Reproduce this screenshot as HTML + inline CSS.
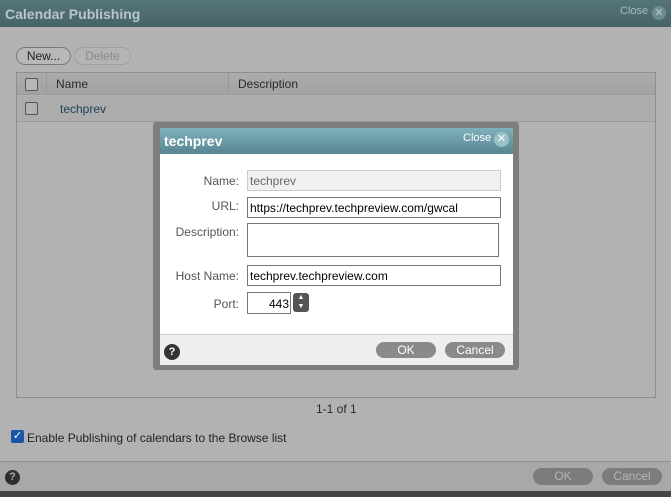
<!DOCTYPE html><html><head><style>
*{box-sizing:border-box;margin:0;padding:0}
body{width:671px;height:497px;overflow:hidden;background:#b2b2b2;font-family:"Liberation Sans",Arial,sans-serif;font-size:12px;position:relative}
.a{position:absolute}
.btn{position:absolute;border-radius:9px;text-align:center;font-size:12px;line-height:16px}
</style></head><body>
<div class="a" style="left:0;top:0;width:671px;height:27px;background:linear-gradient(#557479,#46636a);"></div>
<div class="a" style="left:5px;top:6px;color:#b9c7c9;font-weight:bold;font-size:14px">Calendar Publishing</div>
<div class="a" style="left:620px;top:5px;color:#a9babd;font-size:11px">Close</div>
<div class="a" style="left:652px;top:6px;width:14px;height:14px;border-radius:7px;background:#6e8b90;color:#b9c7c9;font-size:11px;text-align:center;line-height:14px">✕</div>
<div class="btn" style="left:16px;top:47px;width:55px;height:18px;border:1px solid #7a7a7a;background:#b8b8b8;color:#222">New...</div>
<div class="btn" style="left:74px;top:47px;width:57px;height:18px;border:1px solid #a0a0a0;background:#b4b4b4;color:#8a8a8a">Delete</div>
<div class="a" style="left:16px;top:72px;width:640px;height:326px;border:1px solid #8e8e8e;background:#b2b2b2"></div>
<div class="a" style="left:17px;top:73px;width:638px;height:22px;background:linear-gradient(#acacac,#a2a2a2);border-bottom:1px solid #999"></div>
<div class="a" style="left:46px;top:73px;width:1px;height:22px;background:#999"></div>
<div class="a" style="left:228px;top:73px;width:1px;height:22px;background:#999"></div>
<div class="a" style="left:25px;top:78px;width:13px;height:13px;border:1px solid #555;border-radius:2px;background:#b8b8b8"></div>
<div class="a" style="left:56px;top:77px;color:#2a2a2a">Name</div>
<div class="a" style="left:238px;top:77px;color:#2a2a2a">Description</div>
<div class="a" style="left:17px;top:96px;width:638px;height:26px;background:#acacac;border-bottom:1px solid #999"></div>
<div class="a" style="left:25px;top:102px;width:13px;height:13px;border:1px solid #555;border-radius:2px;background:#b2b2b2"></div>
<div class="a" style="left:60px;top:102px;color:#1e3f55">techprev</div>
<div class="a" style="left:316px;top:402px;color:#2a2a2a">1-1 of 1</div>
<div class="a" style="left:11px;top:430px;width:13px;height:13px;border-radius:2px;background:#1b55a6;color:#fff;font-size:11px;line-height:13px;text-align:center">✓</div>
<div class="a" style="left:27px;top:431px;color:#222">Enable Publishing of calendars to the Browse list</div>
<div class="a" style="left:0;top:461px;width:671px;height:1px;background:#939393"></div>
<div class="a" style="left:0;top:462px;width:671px;height:29px;background:#a8a8a8"></div>
<div class="a" style="left:5px;top:470px;width:15px;height:15px;border-radius:8px;background:#2e2e2e;color:#aaa;font-weight:bold;font-size:11px;text-align:center;line-height:15px">?</div>
<div class="btn" style="left:533px;top:468px;width:60px;height:17px;background:#7c7c7c;color:#b5b5b5">OK</div>
<div class="btn" style="left:602px;top:468px;width:60px;height:17px;background:#7c7c7c;color:#b5b5b5">Cancel</div>
<div class="a" style="left:0;top:491px;width:671px;height:6px;background:#454545"></div>

<div class="a" style="left:153px;top:122px;width:366px;height:248px;background:#7e7e7e;border-radius:3px"></div>
<div class="a" style="left:160px;top:128px;width:353px;height:26px;background:linear-gradient(#7fb1bd,#568590)"></div>
<div class="a" style="left:164px;top:133px;color:#fff;font-weight:bold;font-size:14px">techprev</div>
<div class="a" style="left:463px;top:132px;color:#fff;font-size:11px">Close</div>
<div class="a" style="left:494px;top:132px;width:15px;height:15px;border-radius:8px;background:#9cc0c8;color:#fff;font-size:11px;text-align:center;line-height:15px">✕</div>
<div class="a" style="left:160px;top:154px;width:353px;height:180px;background:#fff"></div>
<div class="a" style="left:160px;top:334px;width:353px;height:31px;background:#eeeeec;border-top:1px solid #ccc"></div>
<div class="a" style="left:160px;top:174px;width:79px;text-align:right;color:#555">Name:</div>
<div class="a" style="left:247px;top:170px;width:254px;height:21px;border:1px solid #ccc;background:#f0f0f0;color:#666;padding:3px 2px">techprev</div>
<div class="a" style="left:160px;top:199px;width:79px;text-align:right;color:#555">URL:</div>
<div class="a" style="left:247px;top:197px;width:254px;height:21px;border:1px solid #777;color:#000;padding:3px 2px">https://techprev.techpreview.com/gwcal</div>
<div class="a" style="left:160px;top:225px;width:79px;text-align:right;color:#555">Description:</div>
<div class="a" style="left:247px;top:223px;width:252px;height:34px;border:1px solid #777"></div>
<div class="a" style="left:160px;top:269px;width:79px;text-align:right;color:#555">Host Name:</div>
<div class="a" style="left:247px;top:265px;width:254px;height:21px;border:1px solid #777;color:#000;padding:3px 2px">techprev.techpreview.com</div>
<div class="a" style="left:160px;top:297px;width:79px;text-align:right;color:#555">Port:</div>
<div class="a" style="left:247px;top:292px;width:44px;height:22px;border:1px solid #777;color:#000;text-align:right;padding:4px 1px">443</div>
<div class="a" style="left:293px;top:293px;width:16px;height:19px;background:#555;border-radius:3px;color:#fff;font-size:7px;line-height:9px;text-align:center">▲<br>▼</div>
<div class="a" style="left:164px;top:344px;width:16px;height:16px;border-radius:8px;background:#333;color:#fff;font-weight:bold;font-size:11px;text-align:center;line-height:16px">?</div>
<div class="btn" style="left:376px;top:342px;width:60px;height:16px;background:#8a8a8a;color:#fff">OK</div>
<div class="btn" style="left:445px;top:342px;width:60px;height:16px;background:#8a8a8a;color:#fff">Cancel</div>
</body></html>
